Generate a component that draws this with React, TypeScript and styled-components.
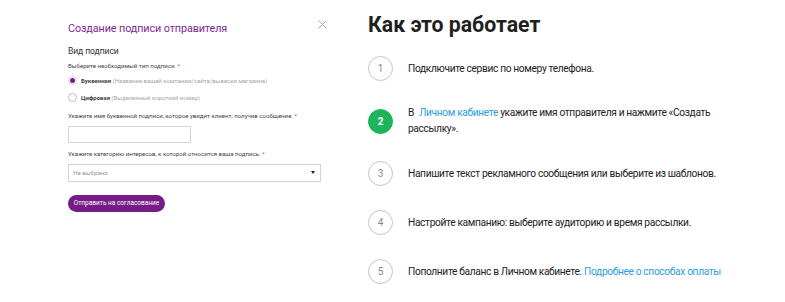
import React from "react";
import styled, { createGlobalStyle } from "styled-components";

const Global = createGlobalStyle`
  html, body { margin: 0; padding: 0; background: #fff; }
  body { font-family: Roboto, "Liberation Sans", Arial, sans-serif; color: #222; }
  * { box-sizing: border-box; }
`;

const Page = styled.div`
  display: flex;
  align-items: flex-start;
  padding-left: 68px;
  width: 785px;
  height: 302px;
  overflow: hidden;
`;

const FormPanel = styled.section`
  width: 260px;
  padding-top: 20px;
  display: flex;
  flex-direction: column;
`;

const HeaderRow = styled.div`
  display: flex;
  justify-content: space-between;
  align-items: flex-start;
`;

const FormTitle = styled.h2`
  margin: 2px 0 0;
  font-size: 10.8px;
  letter-spacing: -0.1px;
  line-height: 14px;
  font-weight: 400;
  color: #7c2a8f;
`;

const CloseButton = styled.button`
  border: 0;
  background: none;
  padding: 0;
  width: 9px;
  height: 9px;
  margin-right: 1px;
  display: flex;
  cursor: pointer;
`;

const SectionTitle = styled.h3`
  margin: 9px 0 0;
  font-size: 8.6px;
  letter-spacing: -0.1px;
  line-height: 12px;
  font-weight: 400;
  color: #333;
`;

const FieldLabel = styled.div<{ $mt: number }>`
  margin-top: ${(p) => p.$mt}px;
  font-size: 6.1px;
  line-height: 9px;
  color: #444;
`;

const Req = styled.span`
  color: #e5383b;
`;

const RadioRow = styled.label<{ $mt: number }>`
  margin-top: ${(p) => p.$mt}px;
  display: flex;
  align-items: center;
  gap: 4px;
  font-size: 6px;
  line-height: 9px;
  color: #333;
`;

const RadioCircle = styled.span<{ $checked?: boolean }>`
  width: 9px;
  height: 9px;
  border-radius: 50%;
  border: 1px solid ${(p) => (p.$checked ? "#d9cde0" : "#bdbdbd")};
  background: #fff;
  display: flex;
  align-items: center;
  justify-content: center;
  &::after {
    content: "";
    width: 5px;
    height: 5px;
    border-radius: 50%;
    background: ${(p) => (p.$checked ? "#731d84" : "transparent")};
  }
`;

const RadioMain = styled.b`
  font-weight: 700;
  color: #444;
`;

const RadioHint = styled.span`
  color: #a5a5a5;
`;

const TextInput = styled.div`
  margin-top: 6px;
  width: 123px;
  height: 17px;
  border: 1px solid #d4d4d4;
  background: #fff;
`;

const Select = styled.div`
  margin-top: 6px;
  width: 253px;
  height: 18px;
  border: 1px solid #d4d4d4;
  display: flex;
  align-items: center;
  justify-content: space-between;
  padding: 0 5px 0 4px;
  font-size: 6.2px;
  color: #999;
`;

const Caret = styled.span`
  width: 0;
  height: 0;
  border-left: 2.5px solid transparent;
  border-right: 2.5px solid transparent;
  border-top: 3px solid #222;
`;

const SubmitButton = styled.button`
  margin-top: 13px;
  align-self: flex-start;
  width: 97px;
  height: 17px;
  border: 0;
  border-radius: 9px;
  background: #761c86;
  color: #fff;
  font-family: inherit;
  font-size: 6.5px;
  padding: 0;
  cursor: pointer;
`;

const HowPanel = styled.section`
  margin-left: 40px;
  padding-top: 14px;
  display: flex;
  flex-direction: column;
`;

const Heading = styled.h1`
  margin: 0;
  font-size: 21.3px;
  line-height: 22px;
  font-weight: 700;
  color: #1f1f1f;
`;

const Steps = styled.ol`
  list-style: none;
  margin: 20px 0 0;
  padding: 0;
  display: flex;
  flex-direction: column;
  gap: 24px;
`;

const Step = styled.li`
  display: flex;
  align-items: center;
  gap: 15px;
`;

const StepNum = styled.span<{ $active?: boolean }>`
  flex: none;
  width: 25px;
  height: 25px;
  border-radius: 50%;
  border: 1px solid ${(p) => (p.$active ? "#1eb45a" : "#c4c4c4")};
  background: ${(p) => (p.$active ? "#1eb45a" : "#fff")};
  color: ${(p) => (p.$active ? "#fff" : "#8a8a8a")};
  font-weight: ${(p) => (p.$active ? 700 : 400)};
  font-size: 10px;
  display: flex;
  align-items: center;
  justify-content: center;
`;

const StepText = styled.p`
  margin: 0;
  font-size: 10.2px;
  letter-spacing: -0.35px;
  line-height: 16px;
  color: #222;
  width: 325px;
`;

const Link = styled.a<{ $lead?: boolean }>`
  color: #2a9de1;
  text-decoration: none;
  margin-left: ${(p) => (p.$lead ? "3px" : "0")};
`;

export default function App() {
  return (
    <>
      <Global />
      <Page>
        <FormPanel>
          <HeaderRow>
            <FormTitle>Создание подписи отправителя</FormTitle>
            <CloseButton aria-label="Закрыть">
              <svg width="9" height="9" viewBox="0 0 9 9">
                <path d="M0.5 0.5L8.5 8.5M8.5 0.5L0.5 8.5" stroke="#a8a8a8" strokeWidth="1" />
              </svg>
            </CloseButton>
          </HeaderRow>
          <SectionTitle>Вид подписи</SectionTitle>
          <FieldLabel $mt={4}>
            Выберите необходимый тип подписи. <Req>*</Req>
          </FieldLabel>
          <RadioRow $mt={6}>
            <RadioCircle $checked />
            <span>
              <RadioMain>Буквенная</RadioMain>{" "}
              <RadioHint>(Название вашей компании/сайта/вывески магазина)</RadioHint>
            </span>
          </RadioRow>
          <RadioRow $mt={7.5}>
            <RadioCircle />
            <span>
              <RadioMain>Цифровая</RadioMain> <RadioHint>(Выделенный короткий номер)</RadioHint>
            </span>
          </RadioRow>
          <FieldLabel $mt={9}>
            Укажите имя буквенной подписи, которое увидит клиент, получив сообщение. <Req>*</Req>
          </FieldLabel>
          <TextInput />
          <FieldLabel $mt={6}>
            Укажите категорию интересов, к которой относится ваша подпись. <Req>*</Req>
          </FieldLabel>
          <Select>
            <span>Не выбрано</span>
            <Caret />
          </Select>
          <SubmitButton>Отправить на согласование</SubmitButton>
        </FormPanel>
        <HowPanel>
          <Heading>Как это работает</Heading>
          <Steps>
            <Step>
              <StepNum>1</StepNum>
              <StepText>Подключите сервис по номеру телефона.</StepText>
            </Step>
            <Step>
              <StepNum $active>2</StepNum>
              <StepText>
                В <Link href="#" $lead>Личном кабинете</Link> укажите имя отправителя и нажмите «Создать рассылку».
              </StepText>
            </Step>
            <Step>
              <StepNum>3</StepNum>
              <StepText>Напишите текст рекламного сообщения или выберите из шаблонов.</StepText>
            </Step>
            <Step>
              <StepNum>4</StepNum>
              <StepText>Настройте кампанию: выберите аудиторию и время рассылки.</StepText>
            </Step>
            <Step>
              <StepNum>5</StepNum>
              <StepText>
                Пополните баланс в Личном кабинете. <Link href="#">Подробнее о способах оплаты</Link>
              </StepText>
            </Step>
          </Steps>
        </HowPanel>
      </Page>
    </>
  );
}
